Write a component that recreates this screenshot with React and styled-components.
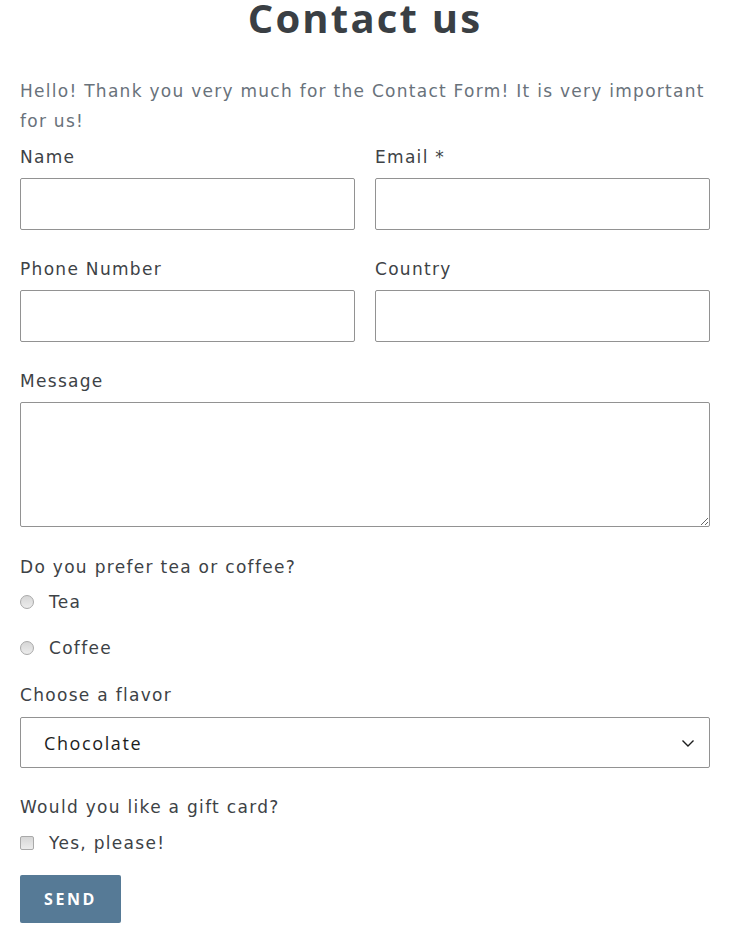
import styled, { createGlobalStyle } from 'styled-components';

const GlobalStyle = createGlobalStyle`
    body {
        margin: 0;
        background: #fff;
        font-family: "DejaVu Sans", "Open Sans", sans-serif;
    }
`;

const Page = styled.div`
    padding: 0 31px 0 20px;
    color: #3d4246;
`;

const Title = styled.h1`
    margin: -10px 0 0;
    text-align: center;
    font-family: "Open Sans", sans-serif;
    font-size: 40px;
    line-height: 56px;
    font-weight: 700;
    letter-spacing: 2.2px;
    color: #3a3f44;
`;

const Intro = styled.p`
    margin: 30px 0 9px;
    font-size: 17px;
    line-height: 30px;
    letter-spacing: 1.27px;
    color: #69727b;
`;

const Form = styled.form`
    display: flex;
    flex-direction: column;
`;

const Row = styled.div`
    display: grid;
    grid-template-columns: 1fr 1fr;
    column-gap: 20px;
`;

const Field = styled.div`
    display: flex;
    flex-direction: column;
    margin-bottom: ${p => p.gap || 27}px;
`;

const Label = styled.label`
    font-size: 17px;
    line-height: 24px;
    letter-spacing: 1.3px;
    margin-bottom: 9px;
    color: #3d4246;
`;

const Input = styled.input`
    box-sizing: border-box;
    height: 52px;
    border: 1px solid #929292;
    border-radius: 2px;
    padding: 0 12px;
    font: inherit;
`;

const TextArea = styled.textarea`
    box-sizing: border-box;
    height: 125px;
    border: 1px solid #929292;
    border-radius: 2px;
    font: inherit;
`;

const Group = styled.div`
    display: flex;
    flex-direction: column;
    margin-bottom: ${p => p.gap}px;
`;

const Question = styled.div`
    font-size: 17px;
    line-height: 24px;
    letter-spacing: 1.3px;
    margin-bottom: ${p => p.space}px;
`;

const Option = styled.label`
    display: flex;
    align-items: center;
    font-size: 17px;
    line-height: 24px;
    letter-spacing: 1.3px;
    margin-bottom: ${p => p.spacing}px;
    input {
        appearance: none;
        box-sizing: border-box;
        margin: -1px 15px 0 0;
        width: 14px;
        height: 14px;
        border: 1px solid #a9a9a9;
        background: linear-gradient(#d6d6d6, #ececec);
        border-radius: ${p => (p.round ? '50%' : '2px')};
    }
`;

const Select = styled.div`
    box-sizing: border-box;
    height: 51px;
    border: 1px solid #929292;
    border-radius: 2px;
    display: flex;
    align-items: center;
    justify-content: space-between;
    padding: 0 14px 0 23px;
    font-family: "Open Sans", sans-serif;
    font-size: 18px;
    letter-spacing: 1.6px;
    color: #1c1d1d;
`;

const SendButton = styled.button`
    width: 101px;
    height: 48px;
    border: none;
    border-radius: 2px;
    background: #567a96;
    color: #fff;
    font-family: "Open Sans", sans-serif;
    font-size: 16px;
    font-weight: 700;
    letter-spacing: 2.6px;
    text-transform: uppercase;
`;

const App = () => (
    <Page>
        <GlobalStyle />
        <Title>Contact us</Title>
        <Intro>Hello! Thank you very much for the Contact Form! It is very important for us!</Intro>
        <Form onSubmit={e => e.preventDefault()}>
            <Row>
                <Field>
                    <Label>Name</Label>
                    <Input />
                </Field>
                <Field>
                    <Label>Email *</Label>
                    <Input />
                </Field>
            </Row>
            <Row>
                <Field>
                    <Label>Phone Number</Label>
                    <Input />
                </Field>
                <Field>
                    <Label>Country</Label>
                    <Input />
                </Field>
            </Row>
            <Field gap={28}>
                <Label>Message</Label>
                <TextArea />
            </Field>
            <Group gap={23}>
                <Question space={11}>Do you prefer tea or coffee?</Question>
                <Option round spacing={22}><input type="radio" name="drink" />Tea</Option>
                <Option round spacing={0}><input type="radio" name="drink" />Coffee</Option>
            </Group>
            <Group gap={27}>
                <Question space={10}>Choose a flavor</Question>
                <Select>
                    <span>Chocolate</span>
                    <svg width="14" height="10" viewBox="0 0 14 10">
                        <path d="M1.5 2.5l5.5 5.5 5.5-5.5" fill="none" stroke="#1c1d1d" strokeWidth="1.4" />
                    </svg>
                </Select>
            </Group>
            <Group gap={20}>
                <Question space={12}>Would you like a gift card?</Question>
                <Option spacing={0}><input type="checkbox" />Yes, please!</Option>
            </Group>
            <div>
                <SendButton>Send</SendButton>
            </div>
        </Form>
    </Page>
);

export default App;
